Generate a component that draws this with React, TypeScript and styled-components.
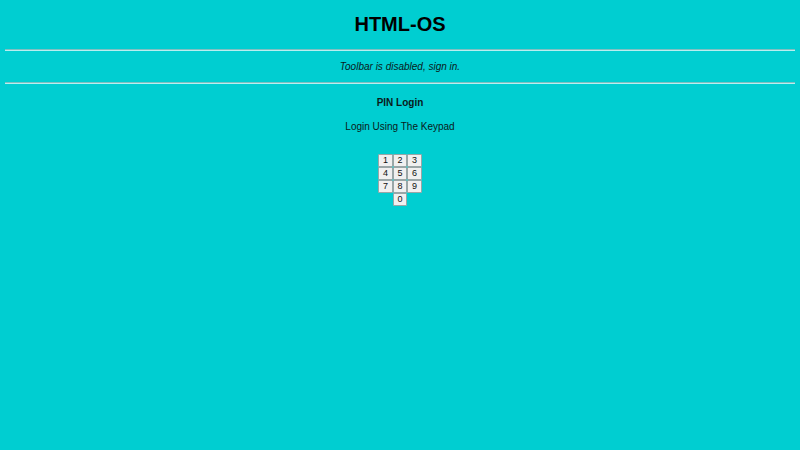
import React from "react";
import styled, { createGlobalStyle } from "styled-components";

const GlobalStyle = createGlobalStyle`
  html, body {
    margin: 0;
    padding: 0;
    background: #00ced1;
  }
  body {
    font-family: "Liberation Sans", Arial, sans-serif;
    color: #000;
  }
`;

const Page = styled.div`
  min-height: 450px;
  padding: 0 5px;
  display: flex;
  flex-direction: column;
  text-align: center;
`;

const Title = styled.h1`
  margin: 13px 0 0;
  font-size: 20px;
  line-height: 23px;
  font-weight: bold;
`;

const Rule = styled.hr<{ $top: number }>`
  margin: ${(p) => p.$top}px 0 0;
  height: 0;
  border: none;
  border-top: 1px solid #7fbfc1;
  border-bottom: 1px solid #b8eef0;
`;

const Notice = styled.p`
  margin: 10px 0 0;
  font-size: 10px;
  line-height: 11.5px;
  font-style: italic;
  color: #0a1a1a;
`;

const Heading = styled.h4`
  margin: 12.5px 0 0;
  font-size: 10px;
  line-height: 11.5px;
  font-weight: bold;
  color: #0a1a1a;
`;

const Text = styled.p`
  margin: 13px 0 0;
  font-size: 10px;
  line-height: 11.5px;
  color: #0a1a1a;
`;

const Keypad = styled.div`
  margin-top: 21px;
  display: flex;
  flex-direction: column;
  align-items: center;
`;

const KeyRow = styled.div`
  display: flex;
  height: 13px;
`;

const Key = styled.button`
  width: 14.5px;
  height: 13px;
  padding: 0;
  margin: 0;
  box-sizing: border-box;
  border: 1px solid #9aa6a7;
  border-radius: 1px;
  background: #f0f0f0;
  font-family: "Liberation Sans", Arial, sans-serif;
  font-size: 9px;
  line-height: 11px;
  color: #111;
`;

const rows = [["1", "2", "3"], ["4", "5", "6"], ["7", "8", "9"], ["0"]];

export default function App() {
  return (
    <>
      <GlobalStyle />
      <Page>
        <Title>HTML-OS</Title>
        <Rule $top={13} />
        <Notice>Toolbar is disabled, sign in.</Notice>
        <Rule $top={9.5} />
        <Heading>PIN Login</Heading>
        <Text>Login Using The Keypad</Text>
        <Keypad>
          {rows.map((row, i) => (
            <KeyRow key={i}>
              {row.map((digit) => (
                <Key key={digit}>{digit}</Key>
              ))}
            </KeyRow>
          ))}
        </Keypad>
      </Page>
    </>
  );
}
